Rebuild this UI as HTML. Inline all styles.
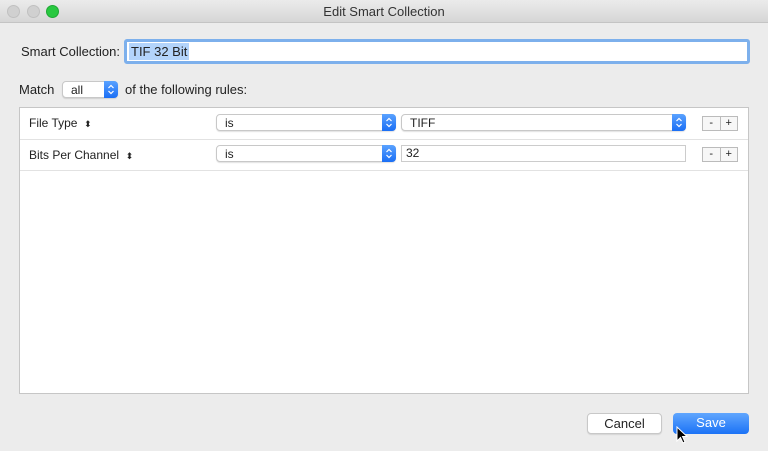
<!DOCTYPE html><html><head><style>
body{margin:0;width:768px;height:451px;background:#ececec;font-family:"Liberation Sans",sans-serif;position:relative;overflow:hidden;font-size:13px;color:#222}
.a{position:absolute}
.tl{width:12px;height:12px;border-radius:50%;top:5px}
.pop{background:#fff;border:1px solid #c8c8c8;border-radius:4px;box-shadow:0 1px 1px rgba(0,0,0,.12);box-sizing:border-box;font-size:12px;padding-left:8px;line-height:16px}
.arr{position:absolute;right:-1px;top:-1px;bottom:-1px;width:14px;background:linear-gradient(#5aa2ff,#1a6ef5);border-radius:0 4px 4px 0}
.arr svg{position:absolute;left:3px;top:3px}
.pm{border:1px solid #bbb;background:#f7f7f7;box-sizing:border-box;height:15px;width:36px;display:flex;font-size:11px}
.pm span{flex:1;text-align:center;line-height:13px}
.pm span:first-child{border-right:1px solid #bbb}
.btn{border-radius:4px;box-sizing:border-box;text-align:center;font-size:13px;line-height:20px;height:21px}
</style></head><body>
<div class="a" style="left:0;top:0;width:768px;height:22px;background:linear-gradient(#ebebeb,#d6d6d6);border-bottom:1px solid #c4c4c4"></div>
<div class="a tl" style="left:7px;background:#d0d0d0;border:1px solid #c0c0c0;width:11px;height:11px"></div>
<div class="a tl" style="left:27px;background:#d0d0d0;border:1px solid #c0c0c0;width:11px;height:11px"></div>
<div class="a tl" style="left:46px;background:#28c840;border:1px solid #1fa834;width:11px;height:11px"></div>
<div class="a" style="left:0;width:768px;top:4px;text-align:center;font-size:13px;color:#333">Edit Smart Collection</div>
<div class="a" style="left:21px;top:44px;font-size:13px">Smart Collection:</div>
<div class="a" style="left:124px;top:39px;width:626px;height:25px;border:3px solid #7db0ec;border-radius:3px;background:#fff;box-sizing:border-box"></div>
<div class="a" style="left:129px;top:43px;height:17px;background:#b3d4fb;padding:0 2px;font-size:13px;line-height:17px">TIF 32 Bit</div>
<div class="a" style="left:19px;top:82px">Match</div>
<div class="a pop" style="left:62px;top:81px;width:56px;height:17px">all<div class="arr"><svg width="8" height="11" viewBox="0 0 8 11"><path d="M1.5 4 L4 1.5 L6.5 4 M1.5 7 L4 9.5 L6.5 7" fill="none" stroke="#fff" stroke-width="1.2"/></svg></div></div>
<div class="a" style="left:125px;top:82px">of the following rules:</div>
<div class="a" style="left:19px;top:107px;width:730px;height:287px;background:#fff;border:1px solid #c6c6c6;box-sizing:border-box"></div>
<div class="a" style="left:20px;top:139px;width:728px;height:1px;background:#e2e2e2"></div>
<div class="a" style="left:20px;top:170px;width:728px;height:1px;background:#e2e2e2"></div>
<div class="a" style="left:29px;top:116px;font-size:12px">File Type&nbsp; <span style="font-size:9px">⬍</span></div>
<div class="a" style="left:29px;top:148px;font-size:12px">Bits Per Channel&nbsp; <span style="font-size:9px">⬍</span></div>
<div class="a pop" style="left:216px;top:114px;width:180px;height:17px">is<div class="arr"><svg width="8" height="11" viewBox="0 0 8 11"><path d="M1.5 4 L4 1.5 L6.5 4 M1.5 7 L4 9.5 L6.5 7" fill="none" stroke="#fff" stroke-width="1.2"/></svg></div></div>
<div class="a pop" style="left:216px;top:145px;width:180px;height:17px">is<div class="arr"><svg width="8" height="11" viewBox="0 0 8 11"><path d="M1.5 4 L4 1.5 L6.5 4 M1.5 7 L4 9.5 L6.5 7" fill="none" stroke="#fff" stroke-width="1.2"/></svg></div></div>
<div class="a pop" style="left:401px;top:114px;width:285px;height:17px">TIFF<div class="arr"><svg width="8" height="11" viewBox="0 0 8 11"><path d="M1.5 4 L4 1.5 L6.5 4 M1.5 7 L4 9.5 L6.5 7" fill="none" stroke="#fff" stroke-width="1.2"/></svg></div></div>
<div class="a" style="left:401px;top:145px;width:285px;height:17px;border:1px solid #ccc;box-sizing:border-box;font-size:12px;padding-left:4px;line-height:15px">32</div>
<div class="a pm" style="left:702px;top:116px"><span>-</span><span>+</span></div>
<div class="a pm" style="left:702px;top:147px"><span>-</span><span>+</span></div>
<div class="a btn" style="left:587px;top:413px;width:75px;background:#fff;border:1px solid #c8c8c8;box-shadow:0 1px 1px rgba(0,0,0,.1)">Cancel</div>
<div class="a btn" style="left:673px;top:413px;width:76px;background:linear-gradient(#60a6fe,#1b72f6);color:#fff">Save</div>
<svg class="a" style="left:676px;top:426px" width="14" height="20" viewBox="0 0 14 20"><path d="M1 1 L1 15 L4.5 11.5 L7 17 L9 16 L6.5 10.5 L11 10.5 Z" fill="#000" stroke="#fff" stroke-width="1"/></svg>
</body></html>
